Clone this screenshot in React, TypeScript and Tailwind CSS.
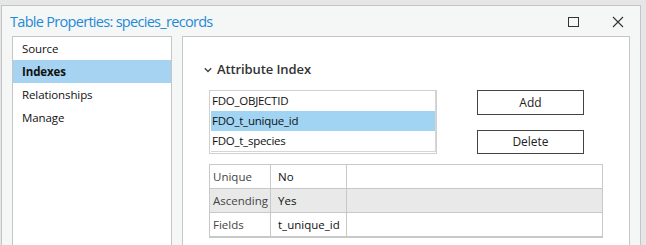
export default function App() {
  const navItems = ['Source', 'Indexes', 'Relationships', 'Manage']
  const indexes = ['FDO_OBJECTID', 'FDO_t_unique_id', 'FDO_t_species']
  const props = [
    { label: 'Unique', value: 'No' },
    { label: 'Ascending', value: 'Yes' },
    { label: 'Fields', value: 't_unique_id' },
  ]

  return (
    <div
      className="w-[646px] h-[245px] overflow-hidden bg-[#e6e6e6] pt-[5px] pl-[1px] pr-[5px]"
      style={{ fontFamily: '"Open Sans", "Noto Sans", sans-serif' }}
    >
      <div className="h-[260px] border border-[#c4c4c4] bg-[#f5f6f6] flex flex-col">
        {/* title bar */}
        <div className="h-[30px] flex items-center pl-[8px] pr-[16px] pt-[2px] shrink-0">
          <div className="text-[14.5px] text-[#1f8ad6] tracking-[-0.7px] leading-none">
            Table Properties: species_records
          </div>
          <div className="ml-auto flex items-center gap-[33px]">
            <div className="w-[11px] h-[10px] border border-[#333]" />
            <svg width="12" height="12" viewBox="0 0 12 12">
              <path d="M1 1L11 11M11 1L1 11" stroke="#333" strokeWidth="1.1" />
            </svg>
          </div>
        </div>

        <div className="flex gap-[10px] px-[10px] flex-1">
          {/* side nav */}
          <div className="w-[160px] border border-[#c6c6c6] bg-white">
            {navItems.map((item) => (
              <div
                key={item}
                className={
                  item === 'Indexes'
                    ? 'h-[23px] flex items-center pl-[9px] text-[11.5px] tracking-[-0.1px] font-bold text-[#111] bg-[#a5d3f1]'
                    : 'h-[23px] flex items-center pl-[9px] text-[11.5px] tracking-[-0.1px] text-[#111]'
                }
              >
                {item}
              </div>
            ))}
          </div>

          {/* main panel */}
          <div className="w-[448px] border border-[#c6c6c6] bg-white pl-[26px] pt-[24px]">
            <div className="h-[18px] flex items-center -ml-[5px] gap-[5px] text-[13px] font-semibold tracking-[-0.1px] text-[#333]">
              <svg width="8" height="6" viewBox="0 0 8 6">
                <path d="M0.8 1.2L4 4.4L7.2 1.2" stroke="#444" strokeWidth="1.4" fill="none" />
              </svg>
              <span>Attribute Index</span>
            </div>

            <div className="flex mt-[11px]">
              <div className="w-[228px] h-[64px] border border-[#d0d0d0] pl-[1px] pb-[2px]">
                <div className="border-b border-r border-[#d6d6d6]">
                  {indexes.map((name) => (
                    <div
                      key={name}
                      className={
                        name === 'FDO_t_unique_id'
                          ? 'h-[20px] flex items-center pl-[1px] text-[11.5px] tracking-[-0.25px] text-[#111] bg-[#a0d4f2]'
                          : 'h-[20px] flex items-center pl-[1px] text-[11.5px] tracking-[-0.25px] text-[#111]'
                      }
                    >
                      {name}
                    </div>
                  ))}
                </div>
              </div>

              <div className="ml-[40px] flex flex-col gap-[15px]">
                <button className="w-[107px] h-[25px] border border-[#444] bg-white text-[12px] text-[#222]">
                  Add
                </button>
                <button className="w-[107px] h-[24px] border border-[#444] bg-white text-[12px] text-[#222]">
                  Delete
                </button>
              </div>
            </div>

            <div className="mt-[10px] w-[394px] border border-[#c8c8c8] border-b-2">
              {props.map((p, i) => (
                <div
                  key={p.label}
                  className={
                    i === 1
                      ? 'h-[24px] flex bg-[#e9e9e9] border-t border-[#c8c8c8]'
                      : i === 0
                        ? 'h-[23px] flex'
                        : 'h-[24px] flex border-t border-[#c8c8c8]'
                  }
                >
                  <div className="w-[61px] flex items-center pl-[3px] text-[11.5px] text-[#444] border-r border-[#c8c8c8]">
                    {p.label}
                  </div>
                  <div className="w-[76px] flex items-center pl-[7px] text-[11.5px] text-[#111] border-r border-[#c8c8c8]">
                    {p.value}
                  </div>
                  <div className="flex-1" />
                </div>
              ))}
            </div>
          </div>
        </div>
      </div>
    </div>
  )
}
